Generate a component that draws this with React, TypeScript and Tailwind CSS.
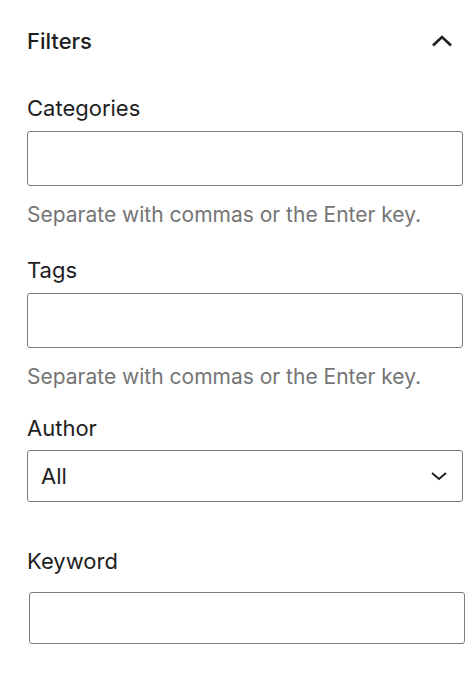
import React from "react";

const font = { fontFamily: "Inter, 'Noto Sans', sans-serif" };

function TextField({ label, help }: { label: string; help?: string }) {
  return (
    <div className="flex flex-col">
      <label className="text-[22px] leading-[28px] text-[#1e1e1e]">{label}</label>
      <input
        type="text"
        className="mt-[9px] h-[55px] w-[436px] rounded-[3px] border-[1.5px] border-[#7a7a7a] bg-white outline-none"
      />
      {help && (
        <p className="mt-[15px] text-[21px] leading-[28px] text-[#757575]">{help}</p>
      )}
    </div>
  );
}

export default function App() {
  return (
    <div className="min-h-[680px] w-[474px] bg-white pl-[27px] pt-[27px]" style={font}>
      {/* Header */}
      <div className="flex h-[28px] w-[436px] items-center justify-between">
        <h2 className="text-[22px] font-medium leading-[28px] text-[#1e1e1e]">Filters</h2>
        <svg width="22" height="14" viewBox="0 0 22 14" className="mr-[10px]">
          <path d="M2 11.5 L11 3 L20 11.5" fill="none" stroke="#1e1e1e" strokeWidth="2.6" />
        </svg>
      </div>

      <div className="mt-[39px]">
        <TextField label="Categories" help="Separate with commas or the Enter key." />
      </div>

      <div className="mt-[27px]">
        <TextField label="Tags" help="Separate with commas or the Enter key." />
      </div>

      {/* Author select */}
      <div className="mt-[23px] flex flex-col">
        <label className="text-[22px] leading-[28px] text-[#1e1e1e]">Author</label>
        <div className="mt-[8px] flex h-[52px] w-[436px] items-center justify-between rounded-[3px] border-[1.5px] border-[#7a7a7a] pl-[13px] pr-[14px]">
          <span className="text-[22px] text-[#1e1e1e]">All</span>
          <svg width="18" height="10" viewBox="0 0 18 10">
            <path d="M2 2 L9 8 L16 2" fill="none" stroke="#1e1e1e" strokeWidth="2" />
          </svg>
        </div>
      </div>

      <div className="mt-[45px]">
        <label className="block text-[22px] leading-[28px] text-[#1e1e1e]">Keyword</label>
        <input
          type="text"
          className="ml-[2px] mt-[17px] h-[52px] w-[436px] rounded-[3px] border-[1.5px] border-[#7a7a7a] bg-white outline-none"
        />
      </div>
    </div>
  );
}
